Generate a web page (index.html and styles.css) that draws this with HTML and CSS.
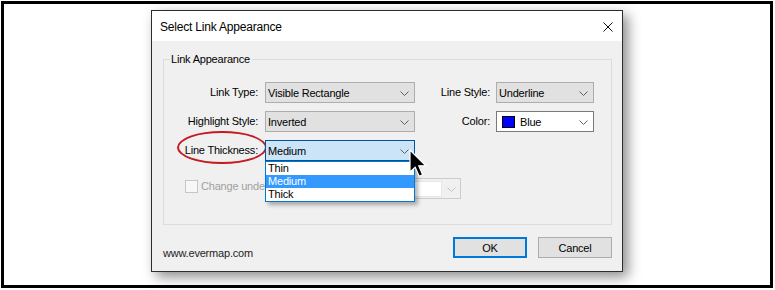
FILE: index.html
```html
<!DOCTYPE html>
<html>
<head>
<meta charset="utf-8">
<link rel="stylesheet" href="styles.css">
</head>
<body>
<div class="screen">
  <div class="dialog">
    <div class="titlebar">
      <span class="title">Select Link Appearance</span>
      <svg class="close" width="10" height="10" viewBox="0 0 10 10"><path d="M0.5 0.5L9.5 9.5M9.5 0.5L0.5 9.5" stroke="#111" stroke-width="1" fill="none"/></svg>
    </div>
    <div class="body">
      <div class="group">
        <span class="legend">Link Appearance</span>
        <div class="grid">
          <span class="lbl">Link Type:</span>
          <div class="combo"><span class="val">Visible Rectangle</span><svg class="chev" width="9" height="5" viewBox="0 0 9 5"><path d="M0.5 0.5L4.5 4.5L8.5 0.5" stroke="#606060" fill="none"/></svg></div>
          <span class="lbl lbl2">Line Style:</span>
          <div class="combo"><span class="val">Underline</span><svg class="chev" width="9" height="5" viewBox="0 0 9 5"><path d="M0.5 0.5L4.5 4.5L8.5 0.5" stroke="#606060" fill="none"/></svg></div>

          <span class="lbl">Highlight Style:</span>
          <div class="combo"><span class="val">Inverted</span><svg class="chev" width="9" height="5" viewBox="0 0 9 5"><path d="M0.5 0.5L4.5 4.5L8.5 0.5" stroke="#606060" fill="none"/></svg></div>
          <span class="lbl lbl2">Color:</span>
          <div class="combo combo-white"><span class="swatch"></span><span class="val">Blue</span><svg class="chev" width="9" height="5" viewBox="0 0 9 5"><path d="M0.5 0.5L4.5 4.5L8.5 0.5" stroke="#606060" fill="none"/></svg></div>

          <span class="lbl circled">Line Thickness:<span class="ellipse"></span></span>
          <div class="combo combo-focus"><span class="val">Medium</span><svg class="chev" width="9" height="5" viewBox="0 0 9 5"><path d="M0.5 0.5L4.5 4.5L8.5 0.5" stroke="#606060" fill="none"/></svg>
            <ul class="list">
              <li>Thin</li>
              <li class="sel">Medium</li>
              <li>Thick</li>
            </ul>
            <svg class="cursor" width="19" height="29" viewBox="0 0 19 29"><path d="M1 1L1 23L6.2 18.2L10.2 27.3L13.6 25.8L9.8 16.8L16.8 16.8Z" fill="#000" stroke="#fff" stroke-width="1.2" stroke-linejoin="miter"/></svg>
          </div>
        </div>
        <div class="checkrow">
          <span class="checkbox"></span>
          <span class="checklbl">Change underline color to:</span>
          <div class="combo combo-disabled"><span class="innerbox"></span><svg class="chev" width="9" height="5" viewBox="0 0 9 5"><path d="M0.5 0.5L4.5 4.5L8.5 0.5" stroke="#c4c4c4" fill="none"/></svg></div>
        </div>
      </div>
      <div class="footer">
        <span class="site">www.evermap.com</span>
        <div class="buttons">
          <button class="btn btn-default">OK</button>
          <button class="btn">Cancel</button>
        </div>
      </div>
    </div>
  </div>
</div>
</body>
</html>
```

FILE: styles.css
```css
html, body {
  margin: 0;
  padding: 0;
  background: #ffffff;
}
body {
  width: 775px;
  height: 290px;
  overflow: hidden;
  font-family: "Liberation Sans", Arial, sans-serif;
  font-size: 11px;
  letter-spacing: -0.2px;
  color: #000;
}
.screen {
  box-sizing: border-box;
  margin: 1px 0 0 1px;
  width: 772px;
  height: 287px;
  border: 3px solid #000;
  padding: 6px 0 0 147px;
}
.dialog {
  box-sizing: border-box;
  width: 472px;
  height: 262px;
  border: 1px solid #2d2d2d;
  background: #f0f0f0;
  box-shadow: 5px 5px 12px rgba(0, 0, 0, 0.45);
  display: flex;
  flex-direction: column;
}
.titlebar {
  height: 30px;
  background: #fff;
  display: flex;
  align-items: center;
  justify-content: space-between;
  padding: 0 9px 0 8px;
  flex: none;
}
.title {
  font-size: 12px;
  color: #000;
  padding-top: 1px;
}
.close {
  display: block;
  margin-top: 1px;
}
.body {
  flex: 1;
  padding: 0 10px 0 11px;
  display: flex;
  flex-direction: column;
}
.group {
  position: relative;
  margin-top: 18px;
  height: 166px;
  box-sizing: border-box;
  border: 1px solid #dcdcdc;
  padding-top: 22px;
}
.legend {
  position: absolute;
  left: 6px;
  top: -9px;
  padding: 0 2px 0 1px;
  background: #f0f0f0;
  line-height: 16px;
  color: #000;
}
.grid {
  display: grid;
  grid-template-columns: 101px 150px 81px 98px;
  grid-auto-rows: 21px;
  row-gap: 8px;
}
.lbl {
  text-align: right;
  padding-right: 7px;
  line-height: 21px;
  white-space: nowrap;
}
.lbl2 {
  padding-right: 6px;
}
.circled {
  position: relative;
}
.ellipse {
  position: absolute;
  left: 13px;
  top: -9px;
  width: 86px;
  height: 29px;
  border: 2px solid #c41a22;
  border-radius: 50%;
  pointer-events: none;
}
.combo {
  position: relative;
  box-sizing: border-box;
  height: 21px;
  border: 1px solid #adadad;
  background: #e1e1e1;
  display: flex;
  align-items: center;
  padding: 0 5px 0 2px;
}
.val {
  flex: 1;
  white-space: nowrap;
  overflow: hidden;
  padding-top: 1px;
}
.chev {
  display: block;
  flex: none;
  margin-top: 1px;
}
.combo-white {
  background: #fff;
  border-color: #7a7a7a;
}
.swatch {
  width: 11px;
  height: 10px;
  border: 1px solid #000;
  background: #0000ff;
  margin: 0 5px 0 3px;
  flex: none;
}
.combo-focus {
  background: #cce4f7;
  border-color: #005499;
}
.list {
  position: absolute;
  left: -1px;
  top: 20px;
  width: 150px;
  box-sizing: border-box;
  margin: 0;
  padding: 0;
  list-style: none;
  border: 1px solid #0078d7;
  background: #fff;
  box-shadow: 3px 3px 4px rgba(0, 0, 0, 0.3);
  z-index: 2;
}
.list li {
  height: 13px;
  line-height: 13px;
  padding-left: 2px;
  color: #000;
}
.list li.sel {
  background: #3399ff;
  color: #fff;
}
.cursor {
  position: absolute;
  left: 143px;
  top: 8px;
  z-index: 3;
}
.checkrow {
  display: flex;
  align-items: flex-start;
  margin-top: 17px;
  padding-left: 21px;
  height: 21px;
}
.checkbox {
  width: 13px;
  height: 13px;
  box-sizing: border-box;
  border: 1px solid #c6c6c6;
  background: #f7f7f7;
  margin-top: 2px;
  flex: none;
}
.checklbl {
  width: 64px;
  flex: none;
  margin-left: 3px;
  color: #a0a0a0;
  line-height: 16px;
  white-space: nowrap;
  overflow: hidden;
}
.combo-disabled {
  width: 81px;
  margin-left: 115px;
  background: #f0f0f0;
  border-color: #cccccc;
  padding: 0 4px 0 2px;
}
.innerbox {
  flex: 1;
  height: 16px;
  box-sizing: border-box;
  background: #fff;
  border: 1px solid #e6e6e6;
  margin-right: 5px;
}
.footer {
  display: flex;
  justify-content: space-between;
  align-items: flex-start;
  margin-top: 12px;
}
.site {
  margin-top: 8px;
  line-height: 16px;
  color: #1e1e1e;
}
.buttons {
  display: flex;
  gap: 11px;
}
.btn {
  box-sizing: border-box;
  width: 74px;
  height: 21px;
  border: 1px solid #adadad;
  background: #e1e1e1;
  font-family: "Liberation Sans", Arial, sans-serif;
  font-size: 11px;
  letter-spacing: -0.2px;
  color: #000;
  padding: 0;
  margin: 0;
}
.btn-default {
  border: 2px solid #0078d7;
}
```
